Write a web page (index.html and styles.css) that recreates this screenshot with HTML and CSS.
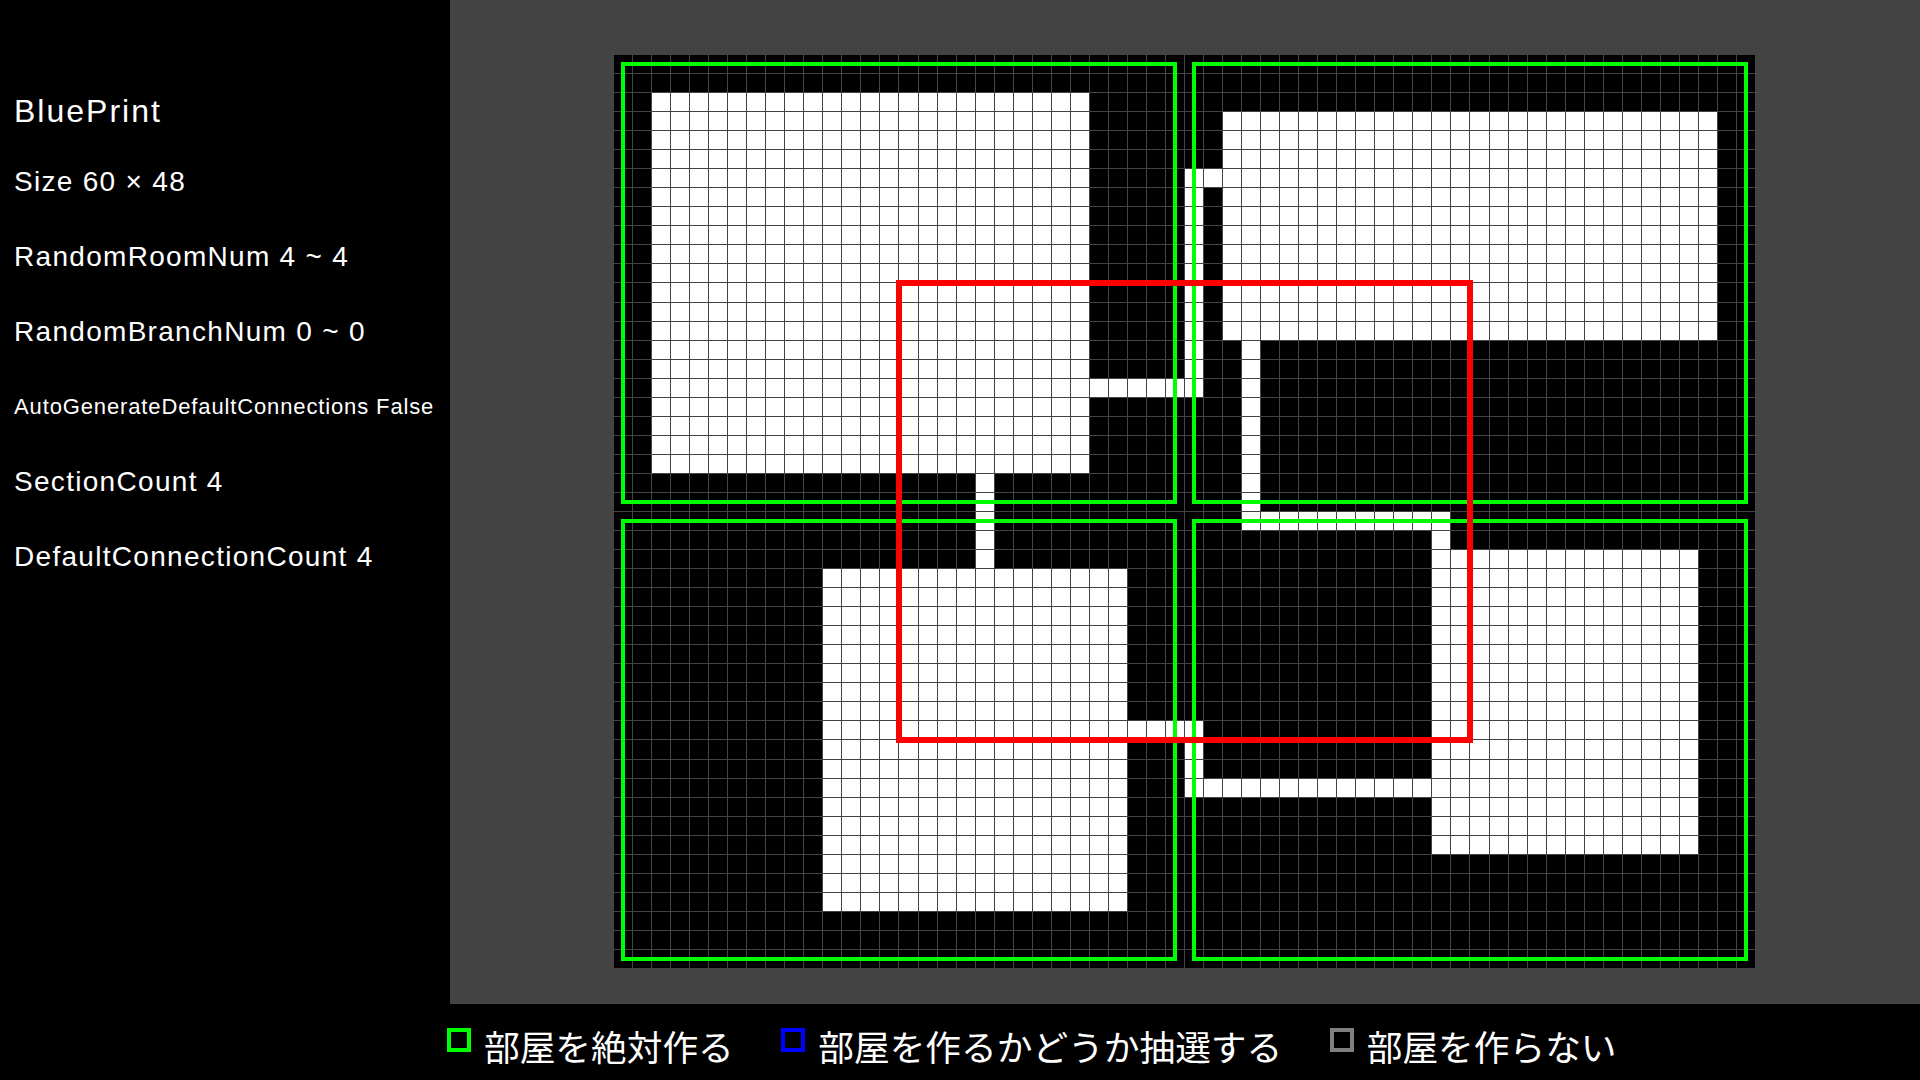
FILE: index.html
```html
<!DOCTYPE html>
<html lang="ja">
<head>
<meta charset="utf-8">
<title>BluePrint</title>
<link rel="stylesheet" href="styles.css">
<script src="script.js" defer></script>
</head>
<body>
<div class="app">
  <aside class="info">
    <div class="title">BluePrint</div>
    <div class="row">Size 60 × 48</div>
    <div class="row">RandomRoomNum 4 ~ 4</div>
    <div class="row">RandomBranchNum 0 ~ 0</div>
    <div class="row small">AutoGenerateDefaultConnections False</div>
    <div class="row">SectionCount 4</div>
    <div class="row">DefaultConnectionCount 4</div>
  </aside>
  <main class="stage">
    <div class="board">
      <div class="cells" id="cells"></div>
      <div class="section s1"></div>
      <div class="section s2"></div>
      <div class="section s3"></div>
      <div class="section s4"></div>
      <div class="range"></div>
    </div>
  </main>
  <footer class="legend">
    <div class="item"><span class="box green"></span><span class="label">部屋を絶対作る</span></div>
    <div class="item"><span class="box blue"></span><span class="label">部屋を作るかどうか抽選する</span></div>
    <div class="item"><span class="box gray"></span><span class="label">部屋を作らない</span></div>
  </footer>
</div>
</body>
</html>
```
FILE: styles.css
```css
* { box-sizing: border-box; }
html, body { margin: 0; padding: 0; background: #000; }
body { width: 1920px; height: 1080px; overflow: hidden; color: #fff; font-family: "Liberation Sans", Arial, sans-serif; }

.app {
  display: grid;
  grid-template-columns: 450px 1470px;
  grid-template-rows: 1004px 76px;
  width: 1920px;
  height: 1080px;
}

.info {
  grid-column: 1;
  grid-row: 1;
  padding: 79px 0 0 14px;
  white-space: nowrap;
}
.title {
  font-size: 32px;
  line-height: 65px;
  letter-spacing: 2px;
}
.row {
  font-size: 28px;
  line-height: 75px;
  letter-spacing: 1.3px;
}
.row.small {
  font-size: 22px;
  letter-spacing: 0.87px;
}

.stage {
  grid-column: 2;
  grid-row: 1;
  background: #434343;
  padding: 55px 0 0 164px;
}
.board {
  position: relative;
  width: 1141px;
  height: 913px;
}
.cells {
  display: grid;
  grid-template-columns: repeat(60, 1fr);
  grid-template-rows: repeat(48, 1fr);
  gap: 1px;
  width: 100%;
  height: 100%;
  background: #434343;
}
.cell { background: #000; }
.cell.floor { background: #fff; }

.section {
  position: absolute;
  width: 556px;
  height: 442px;
  border: 4px solid #00ff00;
}
.s1 { left: 7px; top: 7px; }
.s2 { left: 578px; top: 7px; }
.s3 { left: 7px; top: 464px; }
.s4 { left: 578px; top: 464px; }

.range {
  position: absolute;
  left: 282px;
  top: 225px;
  width: 577px;
  height: 463px;
  border: 6px solid #ff0000;
}

.legend {
  grid-column: 1 / 3;
  grid-row: 2;
  display: flex;
  align-items: flex-start;
  padding: 24px 0 0 447px;
  gap: 47.5px;
  font-family: "Noto Sans CJK JP", "Noto Sans", sans-serif;
}
.item {
  display: flex;
  align-items: flex-start;
  gap: 13px;
}
.box {
  display: block;
  width: 24px;
  height: 24px;
  border: 4px solid;
}
.box.green { border-color: #00ff00; }
.box.blue { border-color: #0000ff; }
.box.gray { border-color: #808080; }
.label {
  font-size: 35.7px;
  line-height: 35.7px;
  color: #fff;
  white-space: nowrap;
}
```
FILE: script.js
```js
(function () {
  var W = 60, H = 48;
  // [x0, y0, x1, y1] inclusive cell rectangles of floor
  var floors = [
    [2, 2, 24, 21],
    [32, 3, 57, 14],
    [11, 27, 26, 44],
    [43, 26, 56, 41],
    [25, 17, 30, 17],
    [30, 6, 30, 17],
    [31, 6, 31, 6],
    [19, 22, 19, 26],
    [33, 15, 33, 24],
    [33, 24, 43, 24],
    [43, 25, 43, 25],
    [27, 35, 30, 35],
    [30, 35, 30, 38],
    [30, 38, 42, 38]
  ];
  function isFloor(x, y) {
    for (var i = 0; i < floors.length; i++) {
      var r = floors[i];
      if (x >= r[0] && x <= r[2] && y >= r[1] && y <= r[3]) return true;
    }
    return false;
  }
  var host = document.getElementById('cells');
  var frag = document.createDocumentFragment();
  for (var y = 0; y < H; y++) {
    for (var x = 0; x < W; x++) {
      var d = document.createElement('div');
      d.className = isFloor(x, y) ? 'cell floor' : 'cell';
      frag.appendChild(d);
    }
  }
  host.appendChild(frag);
})();
```
